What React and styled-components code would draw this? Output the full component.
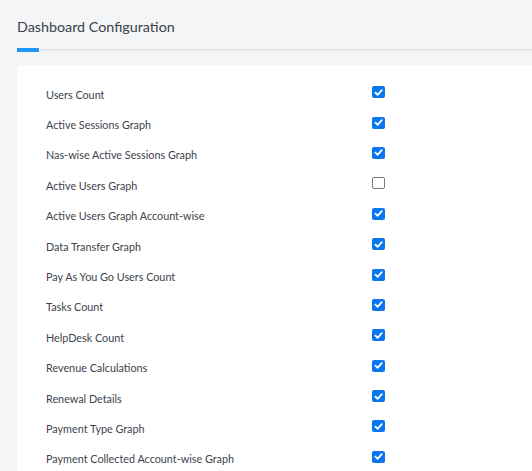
import React from "react";
import styled, { createGlobalStyle } from "styled-components";

const GlobalStyle = createGlobalStyle`
  * { box-sizing: border-box; }
  body {
    margin: 0;
    background: #f4f5f7;
    font-family: Lato, "Open Sans", sans-serif;
    overflow: hidden;
  }
`;

const ITEMS = [
  ["Users Count", true],
  ["Active Sessions Graph", true],
  ["Nas-wise Active Sessions Graph", true],
  ["Active Users Graph", false],
  ["Active Users Graph Account-wise", true],
  ["Data Transfer Graph", true],
  ["Pay As You Go Users Count", true],
  ["Tasks Count", true],
  ["HelpDesk Count", true],
  ["Revenue Calculations", true],
  ["Renewal Details", true],
  ["Payment Type Graph", true],
  ["Payment Collected Account-wise Graph", true],
];

const Page = styled.div`
  width: 100%;
  min-height: 100vh;
  padding: 17px 0 0 17px;
`;

const Title = styled.h1`
  margin: 0;
  font-size: 14.3px;
  font-weight: 400;
  color: #3a414b;
  line-height: 20px;
`;

const TabLine = styled.div`
  margin-top: 11px;
  height: 4px;
  display: flex;
  align-items: center;
`;

const ActiveTab = styled.div`
  width: 22px;
  height: 4px;
  background: #2196f3;
  flex-shrink: 0;
`;

const Rule = styled.div`
  flex: 1;
  height: 2px;
  background: #e4e6ea;
`;

const Card = styled.div`
  margin-top: 13px;
  background: #fff;
  border-radius: 6px 0 0 0;
  padding: 12px 0 0 29px;
  min-height: 500px;
`;

const Row = styled.label`
  display: flex;
  align-items: center;
  height: 30.4px;
  font-size: 10.8px;
  color: #3d434c;
`;

const Name = styled.span`
  width: 327px;
  padding-top: 4px;
`;

const Box = styled.span`
  width: 13px;
  height: 12px;
  margin-left: -1px;
  border-radius: 2px;
  display: flex;
  align-items: center;
  justify-content: center;
  background: ${(p) => (p.$on ? "#0a75f0" : "#fff")};
  border: ${(p) => (p.$on ? "none" : "1.5px solid #7a7a7a")};
`;

const Check = () => (
  <svg width="9" height="9" viewBox="0 0 10 10">
    <path d="M1.6 5.2 L4 7.6 L8.6 2.4" fill="none" stroke="#fff" strokeWidth="2" strokeLinecap="round" strokeLinejoin="round" />
  </svg>
);

export default function App() {
  return (
    <Page>
      <GlobalStyle />
      <Title>Dashboard Configuration</Title>
      <TabLine>
        <ActiveTab />
        <Rule />
      </TabLine>
      <Card>
        {ITEMS.map(([name, on]) => (
          <Row key={name}>
            <Name>{name}</Name>
            <Box $on={on}>{on && <Check />}</Box>
          </Row>
        ))}
      </Card>
    </Page>
  );
}
